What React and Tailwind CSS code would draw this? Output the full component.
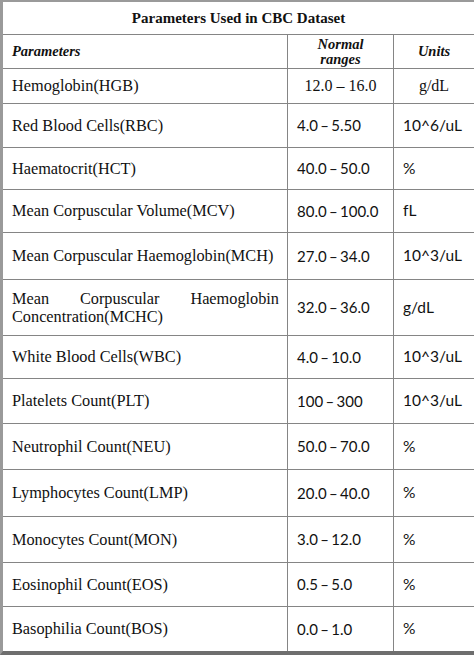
const rows = [
  { name: "Hemoglobin(HGB)", range: "12.0 – 16.0", unit: "g/dL", h: "h-[35px]", serif: true },
  { name: "Red Blood Cells(RBC)", range: "4.0 – 5.50", unit: "10^6/uL", h: "h-[44px]" },
  { name: "Haematocrit(HCT)", range: "40.0 – 50.0", unit: "%", h: "h-[42px]" },
  { name: "Mean Corpuscular Volume(MCV)", range: "80.0 – 100.0", unit: "fL", h: "h-[43px]" },
  { name: "Mean Corpuscular Haemoglobin(MCH)", range: "27.0 – 34.0", unit: "10^3/uL", h: "h-[47px]" },
  { name: "Mean Corpuscular Haemoglobin Concentration(MCHC)", range: "32.0 – 36.0", unit: "g/dL", h: "h-[56px]", wrap: true },
  { name: "White Blood Cells(WBC)", range: "4.0 – 10.0", unit: "10^3/uL", h: "h-[43px]" },
  { name: "Platelets Count(PLT)", range: "100 – 300", unit: "10^3/uL", h: "h-[45px]" },
  { name: "Neutrophil Count(NEU)", range: "50.0 – 70.0", unit: "%", h: "h-[46px]" },
  { name: "Lymphocytes Count(LMP)", range: "20.0 – 40.0", unit: "%", h: "h-[47px]" },
  { name: "Monocytes Count(MON)", range: "3.0 – 12.0", unit: "%", h: "h-[46px]" },
  { name: "Eosinophil Count(EOS)", range: "0.5 – 5.0", unit: "%", h: "h-[44px]" },
  { name: "Basophilia Count(BOS)", range: "0.0 – 1.0", unit: "%", h: "h-[44px]", last: true },
];

const serif = "font-['Liberation_Serif',serif]";
const sans = "font-['Lato',sans-serif]";

function Row({ r }) {
  return (
    <div
      className={`grid grid-cols-[285px_106px_1fr] ${r.h} ${
        r.last ? "" : "border-b border-[#858585]"
      }`}
    >
      <div className={`flex items-center border-r border-[#858585] pl-[9px] pr-[8px] text-[16.3px] leading-[18px] ${serif}`}>
        {r.wrap ? (
          <div className="w-full">
            <div className="flex justify-between">
              <span>Mean</span>
              <span>Corpuscular</span>
              <span>Haemoglobin</span>
            </div>
            <div>Concentration(MCHC)</div>
          </div>
        ) : (
          r.name
        )}
      </div>
      {r.serif ? (
        <>
          <div className={`flex items-center justify-center border-r border-[#858585] text-[16px] ${serif}`}>
            {r.range}
          </div>
          <div className={`flex items-center justify-center text-[16px] ${serif}`}>{r.unit}</div>
        </>
      ) : (
        <>
          <div className={`flex items-center border-r border-[#858585] pl-[9px] text-[15px] [word-spacing:-1.5px] ${sans}`}>
            {r.range}
          </div>
          <div className={`flex items-center pl-[9px] text-[15.5px] ${sans}`}>{r.unit}</div>
        </>
      )}
    </div>
  );
}

export default function App() {
  return (
    <div className="w-[474px] h-[655px] bg-white text-[#111] border-l-[3px] border-t-2 border-b-4 border-l-[#9a9a9a] border-t-[#9a9a9a] border-b-[#6e6e6e]">
      <div className={`flex h-[33px] items-center justify-center border-b border-[#858585] text-[15px] font-bold ${serif}`}>
        Parameters Used in CBC Dataset
      </div>
      <div className={`grid h-[34px] grid-cols-[285px_106px_1fr] border-b border-[#858585] text-[14.5px] font-bold italic ${serif}`}>
        <div className="flex items-center border-r border-[#858585] pl-[9px]">Parameters</div>
        <div className="flex flex-col items-center justify-center border-r border-[#858585] leading-[15px]">
          <span>Normal</span>
          <span>ranges</span>
        </div>
        <div className="flex items-center justify-center">Units</div>
      </div>
      {rows.map((r) => (
        <Row key={r.name} r={r} />
      ))}
    </div>
  );
}
